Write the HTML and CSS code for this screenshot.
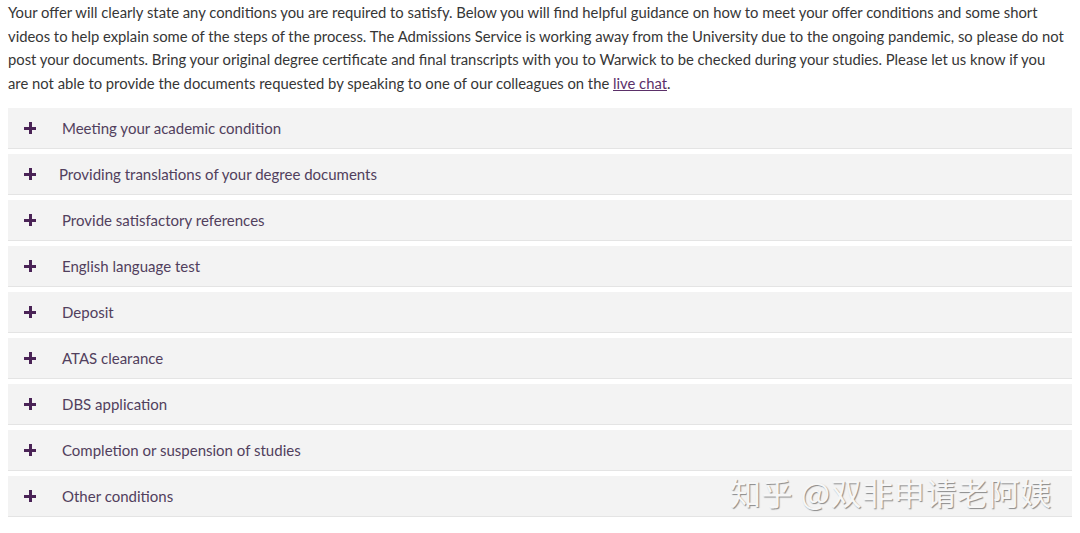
FILE: index.html
```html
<!DOCTYPE html>
<html lang="en">
  <head>
    <meta charset="UTF-8" />
    <meta name="viewport" content="width=device-width, initial-scale=1.0" />
    <title>Offer conditions</title>
    <link rel="stylesheet" href="styles.css">
  </head>
  <body>
    <p class="intro">
      Your offer will clearly state any conditions you are required to satisfy. Below you will find helpful guidance on how to meet your offer conditions and some short videos to help explain some of the steps of the process. The Admissions Service is working away from the University due to the ongoing pandemic, so please do not post your documents. Bring your original degree certificate and final transcripts with you to Warwick to be checked during your studies. Please let us know if you are not able to provide the documents requested by speaking to one of our colleagues on the <a href="#">live chat</a>.
    </p>

    <div class="accordion">
      <div class="panel"><span class="plus"></span><span class="title">Meeting your academic condition</span></div>
      <div class="panel"><span class="plus"></span><span class="title shift">Providing translations of your degree documents</span></div>
      <div class="panel"><span class="plus"></span><span class="title">Provide satisfactory references</span></div>
      <div class="panel"><span class="plus"></span><span class="title">English language test</span></div>
      <div class="panel"><span class="plus"></span><span class="title">Deposit</span></div>
      <div class="panel"><span class="plus"></span><span class="title">ATAS clearance</span></div>
      <div class="panel"><span class="plus"></span><span class="title">DBS application</span></div>
      <div class="panel"><span class="plus"></span><span class="title">Completion or suspension of studies</span></div>
      <div class="panel"><span class="plus"></span><span class="title">Other conditions</span></div>
    </div>

    <div class="watermark">知乎 @双非申请老阿姨</div>
  </body>
</html>
```

FILE: styles.css
```css
body {
  font-family: Lato, "Open Sans", sans-serif;
  background: #fff;
  color: #363636;
  margin: 0;
  padding: 0 8px;
}
.intro {
  width: 1061px;
  margin: 0 0 13px;
  padding-top: 1px;
  font-size: 14.8px;
  line-height: 23.6px;
}
.intro a {
  color: #5b3069;
  text-decoration: underline;
}
.accordion {
  display: flex;
  flex-direction: column;
  gap: 5px;
  width: 1064px;
}
.panel {
  display: flex;
  align-items: center;
  height: 40px;
  background: #f3f3f3;
  border-bottom: 1px solid #e4e4e4;
  font-size: 15px;
  color: #51405d;
}
.plus {
  position: relative;
  width: 12px;
  height: 12px;
  margin: 0 0 0 16px;
  flex-shrink: 0;
}
.plus::before,
.plus::after {
  content: "";
  position: absolute;
  background: #4a2356;
}
.plus::before {
  left: 0;
  top: 4.5px;
  width: 12px;
  height: 3px;
}
.plus::after {
  left: 4.5px;
  top: 0;
  width: 3px;
  height: 12px;
}
.title {
  margin-left: 26px;
}
.title.shift {
  margin-left: 23px;
}
.watermark {
  position: absolute;
  left: 730px;
  top: 469px;
  font-family: "Noto Sans CJK SC", sans-serif;
  font-size: 31px;
  letter-spacing: 0.6px;
  color: #f6f6f6;
  text-shadow: 1px 1px 1px #8a8a8a;
}
```
